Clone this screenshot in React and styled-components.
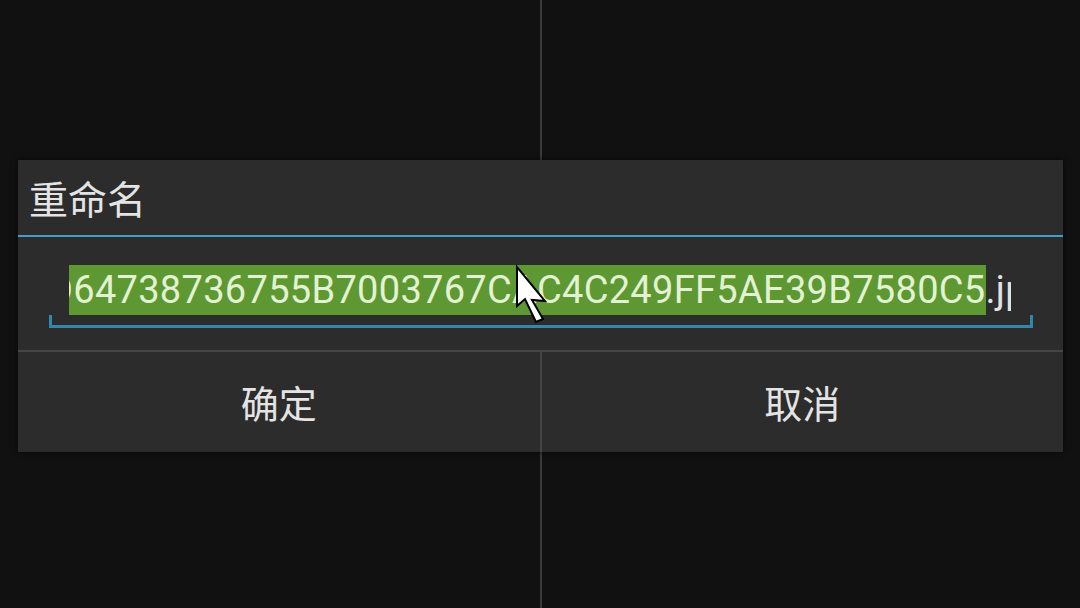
import React from "react";
import styled, { createGlobalStyle } from "styled-components";

const Global = createGlobalStyle`
  html, body { margin: 0; padding: 0; background: #111111; }
  body { width: 1080px; height: 608px; overflow: hidden; }
  #root { width: 1080px; height: 608px; }
`;

const Screen = styled.div`
  position: relative;
  width: 1080px;
  height: 608px;
  box-sizing: border-box;
  padding: 160px 17px 0 18px;
  background-color: #111111;
  background-image: linear-gradient(
    to right,
    transparent 540px,
    #3b3b3b 540px,
    #3b3b3b 542px,
    transparent 542px
  );
`;

const Dialog = styled.div`
  width: 1045px;
  background: #2c2c2c;
  display: flex;
  flex-direction: column;
  box-shadow: 0 0 6px rgba(0, 0, 0, 0.6);
`;

const Title = styled.div`
  height: 75px;
  display: flex;
  align-items: center;
  padding-left: 11px;
  font-family: "Noto Sans CJK SC", "Noto Sans", sans-serif;
  font-size: 39px;
  color: #e4e4e4;
  line-height: 1;
`;

const TitleRule = styled.div`
  height: 2px;
  background: #449fc6;
`;

const InputArea = styled.div`
  height: 113px;
  box-sizing: border-box;
  padding: 28px 30px 0 31px;
`;

const Field = styled.div`
  position: relative;
  width: 984px;
  height: 63px;
  box-sizing: border-box;
  padding-left: 20px;
  border-bottom: 3px solid #2f88ae;

  &::before,
  &::after {
    content: "";
    position: absolute;
    bottom: -3px;
    width: 3px;
    height: 13px;
    background: #2f88ae;
  }
  &::before { left: 0; }
  &::after { right: 0; }
`;

const TextClip = styled.div`
  width: 942px;
  height: 50px;
  overflow: hidden;
  white-space: nowrap;
  font-family: Roboto, "Liberation Sans", sans-serif;
  font-size: 38px;
  line-height: 50px;
  letter-spacing: 0.3px;
`;

const TextRun = styled.div`
  display: inline-block;
  margin-left: -21px;
`;

const Selected = styled.span`
  background: #5e9832;
  color: #e3f2d2;
  padding: 3px 0 4px;
`;

const Rest = styled.span`
  color: #e2e2e2;
`;

const Cursor = styled.svg`
  position: absolute;
  left: 516px;
  top: 266px;
  width: 32px;
  height: 58px;
  overflow: visible;
`;

const Separator = styled.div`
  height: 2px;
  background: #454545;
`;

const Buttons = styled.div`
  height: 100px;
  display: grid;
  grid-template-columns: 1fr 2px 1fr;
`;

const Button = styled.div`
  display: flex;
  align-items: center;
  justify-content: center;
  font-family: "Noto Sans CJK SC", "Noto Sans", sans-serif;
  font-size: 38px;
  color: #e4e4e4;
  padding-bottom: 2px;
`;

const ButtonDivider = styled.div`
  background: #454545;
`;

export default function App() {
  return (
    <>
      <Global />
      <Screen>
        <Dialog>
          <Title>重命名</Title>
          <TitleRule />
          <InputArea>
            <Field>
              <TextClip>
                <TextRun>
                  <Selected>D64738736755B7003767CAC4C249FF5AE39B7580C5</Selected>
                  <Rest>.jpg</Rest>
                </TextRun>
              </TextClip>
            </Field>
          </InputArea>
          <Separator />
          <Buttons>
            <Button>确定</Button>
            <ButtonDivider />
            <Button>取消</Button>
          </Buttons>
        </Dialog>
        <Cursor viewBox="0 0 32 58">
          <polygon
            points="1,1 1,40 9,33 20,56 27,53 16,34 29,35"
            fill="#ffffff"
            stroke="#000000"
            strokeWidth="2"
            strokeLinejoin="miter"
          />
        </Cursor>
      </Screen>
    </>
  );
}
